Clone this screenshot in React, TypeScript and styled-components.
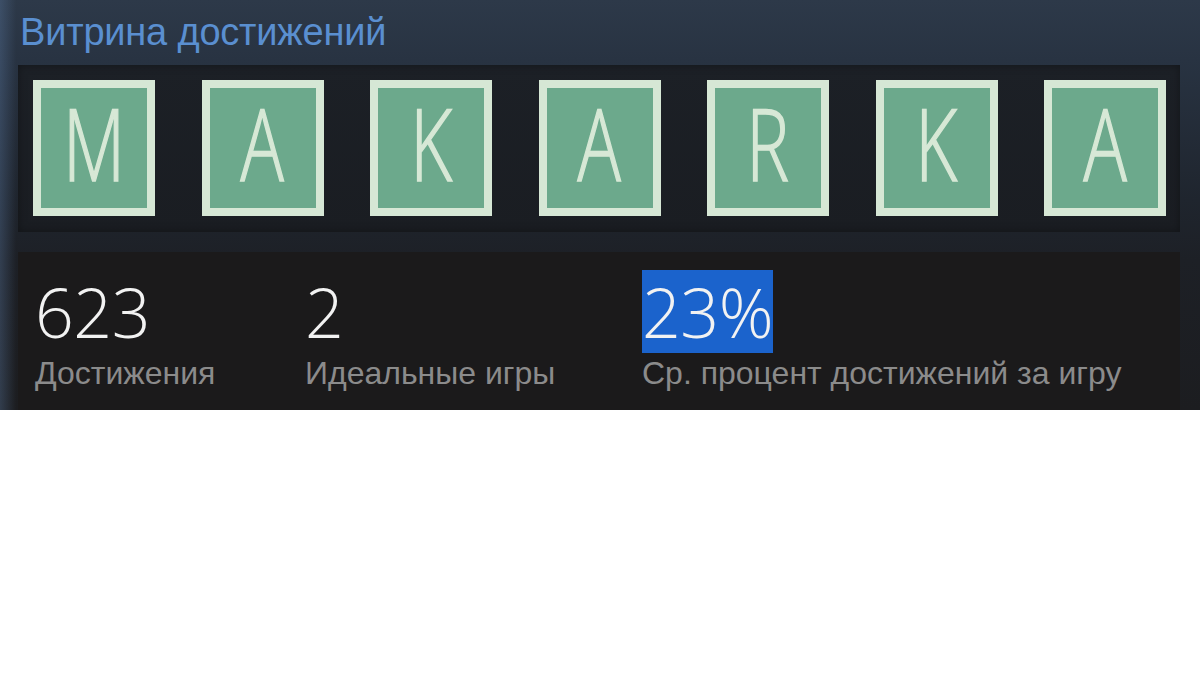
import React from "react";
import styled, { createGlobalStyle } from "styled-components";

const Global = createGlobalStyle`
  html, body { margin: 0; padding: 0; background: #ffffff; }
  body { font-family: "Liberation Sans", Arial, sans-serif; }
`;

const Showcase = styled.section`
  width: 1200px;
  height: 410px;
  box-sizing: border-box;
  padding: 0 20px 0 18px;
  display: flex;
  flex-direction: column;
  background:
    linear-gradient(90deg, rgba(90, 120, 160, 0.35) 0px, rgba(90, 120, 160, 0) 16px),
    linear-gradient(180deg, #2d3949 0px, #283342 60px, #1f252e 200px, #1d2026 260px, #1c1d20 410px);
`;

const Title = styled.h2`
  margin: 0;
  height: 65px;
  box-sizing: border-box;
  padding: 11px 0 0 2px;
  font-family: "Liberation Sans", Arial, sans-serif;
  font-weight: 400;
  font-size: 38px;
  line-height: 42px;
  color: #5a8fd0;
  letter-spacing: -0.2px;
`;

const Strip = styled.div`
  height: 167px;
  box-sizing: border-box;
  padding: 15px 14px 0 15px;
  display: flex;
  justify-content: space-between;
  background: linear-gradient(180deg, #1c2026 0%, #1a1d22 100%);
  box-shadow: inset 0 0 8px rgba(0, 0, 0, 0.35);
`;

const Tile = styled.div`
  width: 122px;
  height: 136px;
  box-sizing: border-box;
  border: 8px solid #d6e7d5;
  background: #6ca98c;
  display: flex;
  align-items: flex-start;
  justify-content: center;
  padding-top: 16px;
`;

const Glyph = styled.span`
  font-family: "Open Sans", "DejaVu Sans", sans-serif;
  font-weight: 300;
  font-size: 100px;
  line-height: 76px;
  height: 76px;
  color: #d7e8d6;
  -webkit-text-stroke: 1.6px #d7e8d6;
  transform: scaleX(0.72);
`;

const Stats = styled.div`
  margin-top: 20px;
  flex: 1;
  display: grid;
  grid-template-columns: 270px 337px auto;
  align-content: start;
  padding: 18px 0 0 17px;
  background: #1b1a1b;
`;

const Stat = styled.div`
  display: flex;
  flex-direction: column;
  align-items: flex-start;
`;

const Value = styled.span<{ $selected?: boolean }>`
  font-family: "Open Sans", "Segoe UI", sans-serif;
  font-weight: 300;
  font-size: 68px;
  line-height: 83px;
  color: #f2f2f2;
  letter-spacing: -0.5px;
  background: ${(p) => (p.$selected ? "#1b63cc" : "transparent")};
`;

const Label = styled.span`
  font-family: "Liberation Sans", Arial, sans-serif;
  font-size: 32px;
  line-height: 36px;
  color: #8b8b8b;
  margin-top: 2px;
  letter-spacing: 0px;
`;

const letters = ["M", "A", "K", "A", "R", "K", "A"];

const stats = [
  { value: "623", label: "Достижения" },
  { value: "2", label: "Идеальные игры" },
  { value: "23%", label: "Ср. процент достижений за игру", selected: true },
];

export default function App() {
  return (
    <>
      <Global />
      <Showcase>
        <Title>Витрина достижений</Title>
        <Strip>
          {letters.map((l, i) => (
            <Tile key={i}>
              <Glyph>{l}</Glyph>
            </Tile>
          ))}
        </Strip>
        <Stats>
          {stats.map((s) => (
            <Stat key={s.label}>
              <Value $selected={s.selected}>{s.value}</Value>
              <Label>{s.label}</Label>
            </Stat>
          ))}
        </Stats>
      </Showcase>
    </>
  );
}
